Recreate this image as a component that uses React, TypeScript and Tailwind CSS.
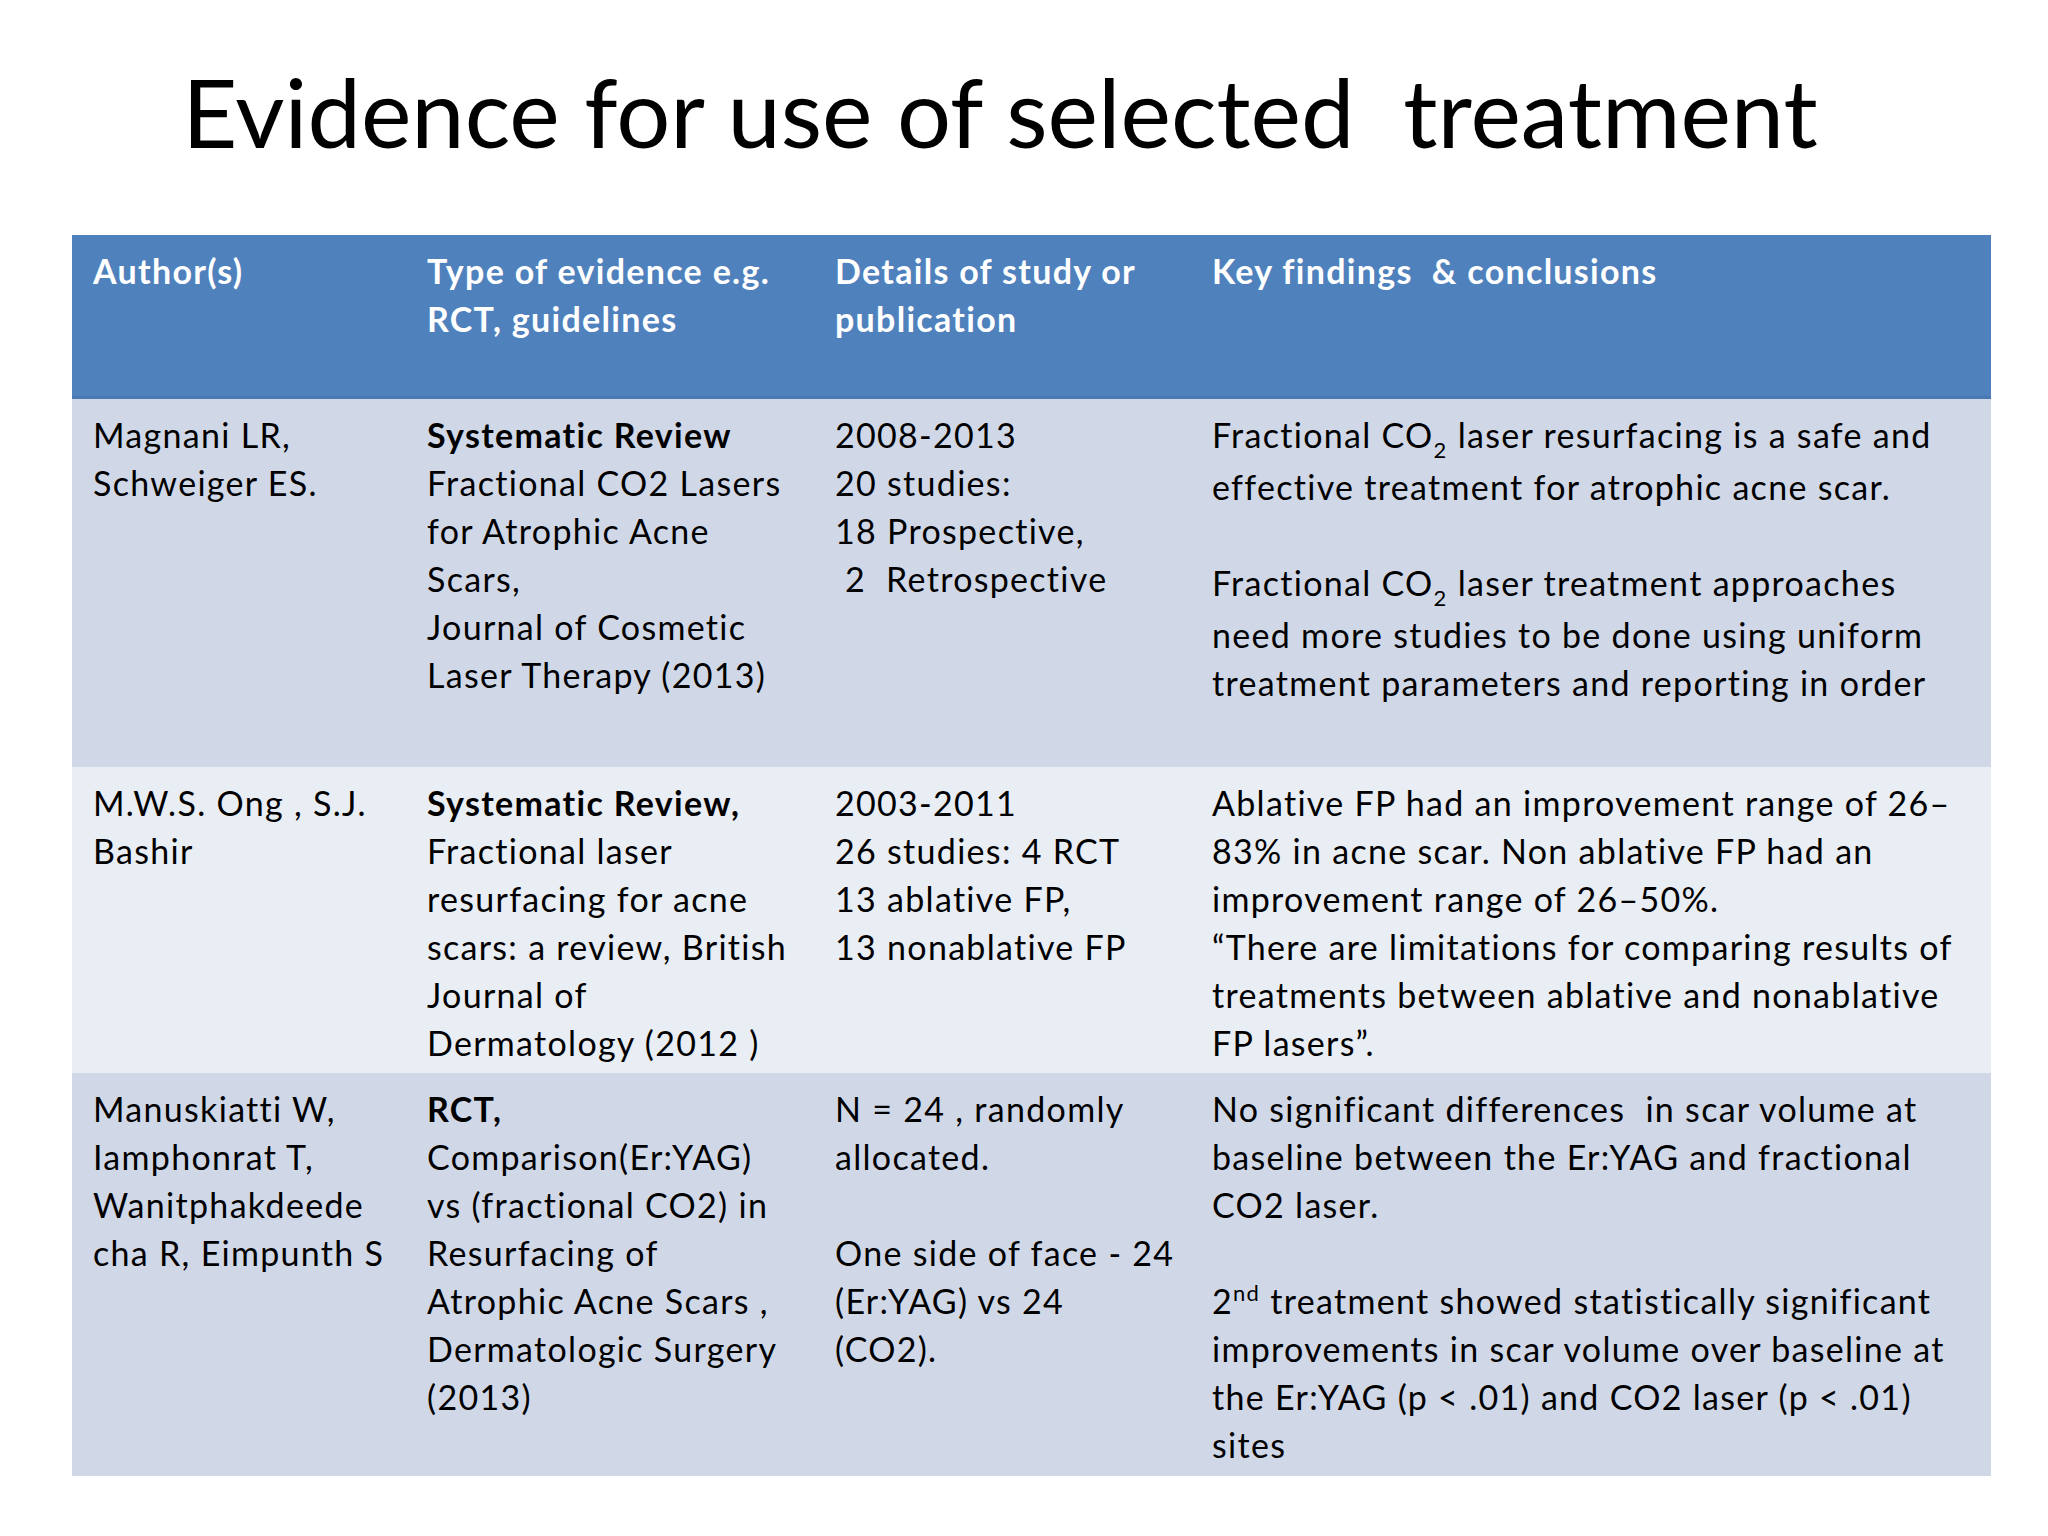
import type { ReactNode } from "react";

type Line = ReactNode;

interface Row {
  bg: string;
  height: string;
  cells: Line[][];
  bold: (string | null)[];
}

const Sub = ({ children }: { children: ReactNode }) => (
  <span className="relative top-[10px] text-[22px] leading-none">{children}</span>
);

const Sup = ({ children }: { children: ReactNode }) => (
  <span className="relative -top-[13px] text-[22px] leading-none">{children}</span>
);

const blank = "\u00a0";

const rows: Row[] = [
  {
    bg: "bg-[#d0d8e8]",
    height: "h-[368px]",
    bold: [null, "Systematic Review", null, null],
    cells: [
      ["Magnani LR,", "Schweiger ES."],
      [
        "Fractional CO2 Lasers",
        "for Atrophic Acne",
        "Scars,",
        "Journal of Cosmetic",
        "Laser Therapy (2013)",
      ],
      ["2008-2013", "20 studies:", "18 Prospective,", " 2  Retrospective"],
      [
        <span className="block pb-[4px]">
          Fractional CO<Sub>2</Sub> laser resurfacing is a safe and
        </span>,
        "effective treatment for atrophic acne scar.",
        blank,
        <span className="block pb-[4px]">
          Fractional CO<Sub>2</Sub> laser treatment approaches
        </span>,
        "need more studies to be done using uniform",
        "treatment parameters and reporting in order",
      ],
    ],
  },
  {
    bg: "bg-[#e9edf4]",
    height: "h-[306px]",
    bold: [null, "Systematic Review,", null, null],
    cells: [
      ["M.W.S. Ong , S.J.", "Bashir"],
      [
        "Fractional laser",
        "resurfacing for acne",
        "scars: a review, British",
        "Journal of",
        "Dermatology (2012 )",
      ],
      ["2003-2011", "26 studies: 4 RCT", "13 ablative FP,", "13 nonablative FP"],
      [
        "Ablative FP had an improvement range of 26–",
        "83% in acne scar. Non ablative FP had an",
        "improvement range of 26–50%.",
        "“There are limitations for comparing results of",
        "treatments between ablative and nonablative",
        "FP lasers”.",
      ],
    ],
  },
  {
    bg: "bg-[#d0d8e8]",
    height: "h-[403px]",
    bold: [null, "RCT,", null, null],
    cells: [
      ["Manuskiatti W,", "Iamphonrat T,", "Wanitphakdeede", "cha R, Eimpunth S"],
      [
        "Comparison(Er:YAG)",
        "vs (fractional CO2) in",
        "Resurfacing of",
        "Atrophic Acne Scars ,",
        "Dermatologic Surgery",
        "(2013)",
      ],
      [
        "N = 24 , randomly",
        "allocated.",
        blank,
        "One side of face - 24",
        "(Er:YAG) vs 24",
        "(CO2).",
      ],
      [
        "No significant differences  in scar volume at",
        "baseline between the Er:YAG and fractional",
        "CO2 laser.",
        blank,
        <>
          2<Sup>nd</Sup> treatment showed statistically significant
        </>,
        "improvements in scar volume over baseline at",
        "the Er:YAG (p < .01) and CO2 laser (p < .01)",
        "sites",
      ],
    ],
  },
];

const headers: string[][] = [
  ["Author(s)"],
  ["Type of evidence e.g.", "RCT, guidelines"],
  ["Details of study or", "publication"],
  ["Key findings  & conclusions"],
];

const cellPad = "pl-[21px] pr-[4px] pt-[12px]";

const App = () => {
  return (
    <div className="w-[2048px] h-[1536px] bg-white font-['Lato',sans-serif] text-black overflow-hidden">
      <div className="h-[235px] pt-[64px] pr-[48px] flex justify-center">
        <h1 className="text-[95.5px] leading-none whitespace-pre font-normal">
          Evidence for use of selected  treatment
        </h1>
      </div>

      <div className="ml-[72px] w-[1919px] text-[34px] leading-[48px] tracking-[1.3px]">
        {/* header row */}
        <div className="grid grid-cols-[334px_408px_377px_800px] h-[164px] bg-[#4f81bd] border-b-[3px] border-[#4a78b2] text-white font-bold">
          {headers.map((lines, i) => (
            <div key={i} className={cellPad}>
              {lines.map((l, j) => (
                <div key={j} className="whitespace-pre">
                  {l}
                </div>
              ))}
            </div>
          ))}
        </div>

        {rows.map((row, r) => (
          <div
            key={r}
            className={`grid grid-cols-[334px_408px_377px_800px] ${row.height} ${row.bg}`}
          >
            {row.cells.map((lines, c) => (
              <div key={c} className={cellPad}>
                {row.bold[c] && <div className="font-bold">{row.bold[c]}</div>}
                {lines.map((l, j) => (
                  <div key={j} className="whitespace-pre">
                    {l}
                  </div>
                ))}
              </div>
            ))}
          </div>
        ))}
      </div>
    </div>
  );
};

export default App;
